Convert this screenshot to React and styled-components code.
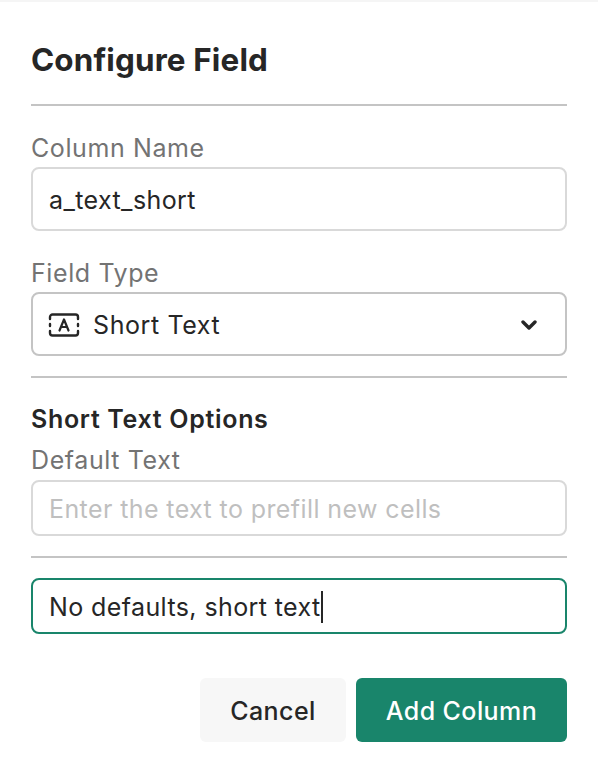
import React from "react";
import styled, { createGlobalStyle } from "styled-components";

const Global = createGlobalStyle`
  html, body { margin: 0; padding: 0; background: #fff; }
  * { box-sizing: border-box; }
  body { font-family: Inter, "Liberation Sans", sans-serif; -webkit-font-smoothing: antialiased; }
`;

const Panel = styled.div`
  width: 598px;
  height: 767px;
  padding: 40px 31px 0 31px;
  background: #fff;
  border-top: 2px solid #f5f5f5;
  color: #262626;
`;
const Title = styled.h1`
  margin: 0;
  font-size: 31.4px;
  letter-spacing: 0.15px;
  line-height: 36px;
  font-weight: 700;
  color: #262626;
`;
const Divider = styled.hr`
  margin: ${(p) => p.$top}px 0 ${(p) => p.$bottom}px;
  border: 0;
  height: 2px;
  background: #c4c4c4;
`;
const Label = styled.div`
  margin: 0 0 ${(p) => p.$gap || 4}px;
  font-size: 25px;
  letter-spacing: 0.6px;
  line-height: 30px;
  color: #737373;
`;
const Field = styled.div`
  display: flex;
  align-items: center;
  height: ${(p) => p.$h}px;
  padding: 2px 16px 0 16px;
  border: 2px solid ${(p) => p.$border || "#d9d9d9"};
  border-radius: 8px;
  font-size: 25px;
  letter-spacing: 0.4px;
  color: ${(p) => p.$color || "#262626"};
  background: #fff;
`;
const Caret = styled.span`
  display: inline-block;
  width: 2px;
  height: 32px;
  background: #262626;
`;
const SelectField = styled(Field)`
  border-color: #c4c4c4;
  gap: 13px;
  padding: 1px 28px 0 15px;
  letter-spacing: 0.6px;
`;
const Grow = styled.span`
  flex: 1;
`;
const SubHeading = styled.h2`
  margin: 0 0 11px;
  font-size: 25px;
  letter-spacing: 0.68px;
  line-height: 30px;
  font-weight: 600;
  color: #262626;
`;
const Gap = styled.div`
  height: ${(p) => p.$h}px;
`;
const Actions = styled.div`
  display: flex;
  justify-content: flex-end;
  gap: 10px;
  margin-top: 44px;
`;
const Button = styled.button`
  height: 64px;
  width: ${(p) => p.$w}px;
  border: 0;
  border-radius: 6px;
  padding: 1px 0 0;
  font: 500 25px Inter, "Liberation Sans", sans-serif;
  letter-spacing: 0.42px;
  background: ${(p) => (p.$primary ? "#19856b" : "#f7f7f7")};
  color: ${(p) => (p.$primary ? "#fff" : "#262626")};
`;

const TextIcon = () => (
  <svg width="32" height="24" viewBox="0 0 32 24" fill="none" stroke="#262626" strokeWidth="2.4" strokeLinecap="round" strokeLinejoin="round">
    <path d="M2 6V4a2.5 2.5 0 0 1 2.5-2.5h23A2.5 2.5 0 0 1 30 4v2" />
    <path d="M2 18v2a2.5 2.5 0 0 0 2.5 2.5h23A2.5 2.5 0 0 0 30 20v-2" />
    <path d="M2 11v2M30 11v2" />
    <path d="M11.5 17.5 16 6.5l4.5 11M13 14h6" strokeWidth="2.2" />
  </svg>
);
const Chevron = () => (
  <svg width="16" height="10" viewBox="0 0 16 10" fill="none" stroke="#262626" strokeWidth="3.4" strokeLinecap="round" strokeLinejoin="round">
    <path d="M2 2l6 6 6-6" />
  </svg>
);

export default function App() {
  return (
    <Panel>
      <Global />
      <Title>Configure Field</Title>
      <Divider $top={26} $bottom={27} />
      <Label>Column Name</Label>
      <Field $h={64}>a_text_short</Field>
      <Gap $h={27} />
      <Label>Field Type</Label>
      <SelectField $h={64}>
        <TextIcon />
        <span>Short Text</span>
        <Grow />
        <Chevron />
      </SelectField>
      <Divider $top={20} $bottom={26} />
      <SubHeading>Short Text Options</SubHeading>
      <Label $gap={5}>Default Text</Label>
      <Field $h={56} $color="#bfbfbf">Enter the text to prefill new cells</Field>
      <Divider $top={20} $bottom={20} />
      <Field $h={56} $border="#19856b">
        No defaults, short text
        <Caret />
      </Field>
      <Actions>
        <Button $w={146}>Cancel</Button>
        <Button $w={211} $primary>Add Column</Button>
      </Actions>
    </Panel>
  );
}
